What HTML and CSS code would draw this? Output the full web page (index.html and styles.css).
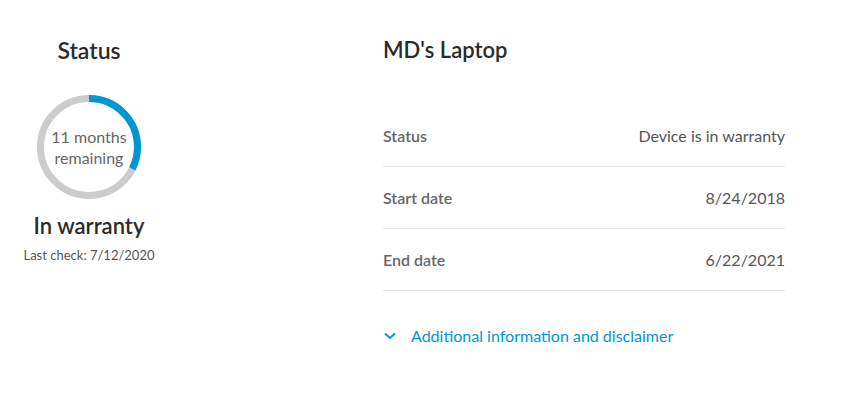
FILE: index.html
```html
<!DOCTYPE html>
<html lang="en">
<head>
<meta charset="utf-8">
<link rel="stylesheet" href="styles.css">
</head>
<body>
<main class="page">
  <section class="status-col">
    <h2 class="heading">Status</h2>
    <div class="ring">
      <svg width="104" height="104" viewBox="0 0 104 104">
        <circle cx="52" cy="52" r="48.5" fill="none" stroke="#cccccc" stroke-width="7"/>
        <circle cx="52" cy="52" r="48.5" fill="none" stroke="#0096d6" stroke-width="7"
          stroke-dasharray="98.8 400" transform="rotate(-90 52 52)"/>
      </svg>
      <div class="ring-text">11 months<br>remaining</div>
    </div>
    <div class="state">In warranty</div>
    <div class="last-check">Last check: 7/12/2020</div>
  </section>
  <section class="detail-col">
    <h2 class="heading">MD's Laptop</h2>
    <div class="rows">
      <div class="row"><span class="label">Status</span><span class="value">Device is in warranty</span></div>
      <div class="row"><span class="label">Start date</span><span class="value">8/24/2018</span></div>
      <div class="row"><span class="label">End date</span><span class="value">6/22/2021</span></div>
    </div>
    <a class="more" href="#">
      <svg class="chev" width="12" height="8" viewBox="0 0 12 8"><path d="M1 1.5 L6 6 L11 1.5" fill="none" stroke="#0096d6" stroke-width="2"/></svg>
      <span>Additional information and disclaimer</span>
    </a>
  </section>
</main>
</body>
</html>
```
FILE: styles.css
```css
html, body { margin: 0; padding: 0; background: #fff; }
body { font-family: Lato, "Open Sans", sans-serif; color: #333; }
.page { display: flex; padding-top: 36px; }
.status-col { width: 178px; display: flex; flex-direction: column; align-items: center; }
.heading { margin: 0; font-size: 22px; font-weight: 600; line-height: 28px; color: #2b2b2b; }
.status-col .heading { font-size: 23px; }
.ring { position: relative; width: 104px; height: 104px; margin-top: 31px; }
.ring svg { display: block; }
.ring-text { position: absolute; inset: 0; display: flex; align-items: center; justify-content: center; text-align: center; font-size: 16px; line-height: 21px; color: #666; font-weight: 400; }
.state { margin-top: 13px; font-size: 22px; font-weight: 600; line-height: 28px; color: #2b2b2b; }
.last-check { margin-top: 7px; font-size: 13px; line-height: 16px; color: #555; }
.detail-col { margin-left: 205px; width: 402px; }
.rows { margin-top: 41px; }
.row { display: flex; justify-content: space-between; align-items: center; height: 61px; border-bottom: 1px solid #e6e6e6; font-size: 16px; }
.label { font-weight: 600; color: #666; }
.value { color: #555; }
.more { display: flex; align-items: center; margin-top: 33px; text-decoration: none; color: #0096d6; font-size: 16px; line-height: 24px; }
.chev { margin-left: 1px; margin-right: 15px; }
```
